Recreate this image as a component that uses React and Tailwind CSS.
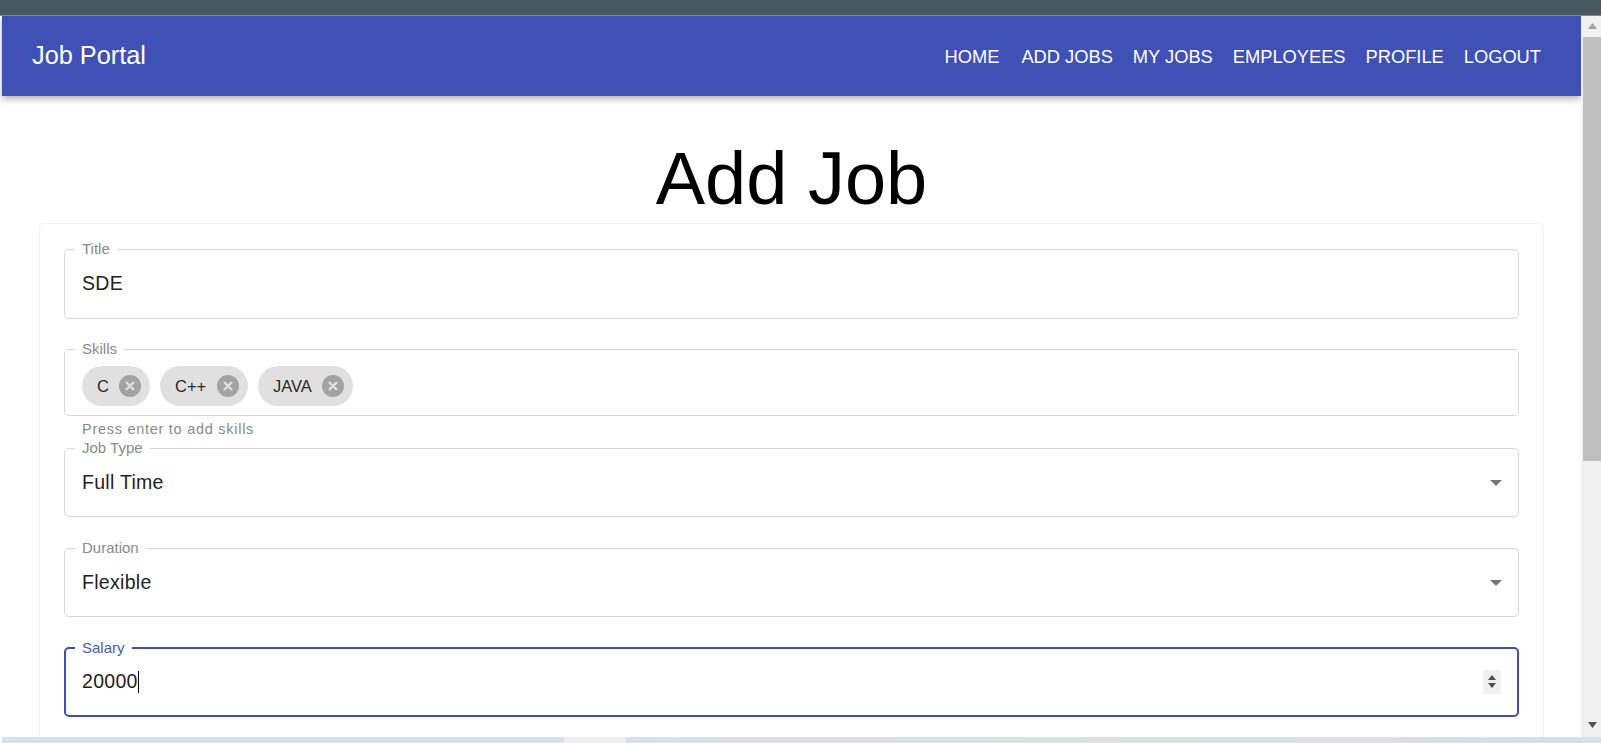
const navLinks = [
  { label: 'HOME', cls: 'mr-[22px]' },
  { label: 'ADD JOBS', cls: 'mr-[20px]' },
  { label: 'MY JOBS', cls: 'mr-[20px]' },
  { label: 'EMPLOYEES', cls: 'mr-[20px]' },
  { label: 'PROFILE', cls: 'mr-[20px]' },
  { label: 'LOGOUT', cls: '' },
];

function Field({ label, focused, className, bodyClass, children }) {
  return (
    <fieldset
      className={`rounded-[5px] pr-[10px] shrink-0 ${focused ? 'pl-[9px] border-2 border-[#3f51ad]' : 'pl-[10px] border border-[#d6d6d6]'} ${className}`}
    >
      <legend className={`px-[7px] text-[15px] leading-[10px] ${focused ? 'text-[#4a5bab]' : 'text-[#8a8a8a]'}`}>
        {label}
      </legend>
      <div className={`flex items-center pl-[7px] pb-[5px] text-[19.5px] tracking-[0.015em] ${bodyClass}`}>
        {children}
      </div>
    </fieldset>
  );
}

function Chip({ label, className }) {
  return (
    <div className={`h-10 rounded-full bg-[#e0e0e0] flex items-center justify-between pl-[15px] pr-[9px] text-[16.5px] tracking-normal text-[#2a2a2a] ${className}`}>
      <span>{label}</span>
      <svg width="22" height="22" viewBox="0 0 22 22" aria-hidden="true">
        <circle cx="11" cy="11" r="11" fill="#a3a3a3" />
        <path d="M7 7l8 8M15 7l-8 8" stroke="#e0e0e0" strokeWidth="2.4" />
      </svg>
    </div>
  );
}

function Caret() {
  return (
    <svg className="ml-auto mr-[6px]" width="12" height="6" viewBox="0 0 12 6" aria-hidden="true">
      <path d="M0 0h12L6 6z" fill="#757575" />
    </svg>
  );
}

export default function App() {
  return (
    <div className="h-[743px] w-[1601px] overflow-hidden flex flex-col bg-white font-['Liberation_Sans',Arial,sans-serif]">
      {/* Browser strip above the page */}
      <div className="h-[16px] shrink-0 bg-[#47585f] relative">
        <div className="h-px w-full absolute bottom-0 bg-[#7c8a9c]" />
      </div>

      <div className="flex-1 min-h-0 flex">
        <div className="flex-1 min-w-0 pl-[2px] flex flex-col overflow-hidden">
          {/* Navbar */}
          <header className="h-[80px] shrink-0 bg-[#3f51b5] text-white flex items-center pl-[30px] pr-[40px] shadow-[0_3px_7px_rgba(0,0,0,0.3)] relative">
            <div className="text-[25.3px] flex-1">Job Portal</div>
            <nav className="flex text-[18.3px] pt-[1px]">
              {navLinks.map(({ label, cls }) => (
                <span key={label} className={cls}>{label}</span>
              ))}
            </nav>
          </header>

          <h1 className="text-[74px] leading-[85px] text-center text-black mt-[40px] shrink-0">Add Job</h1>

          {/* Form card */}
          <main className="ml-[37px] w-[1505px] flex-1 min-h-0 mt-[2px] rounded-t-[5px] border border-b-0 border-[#f3f3f3] pt-[20px] pl-[24px] pr-[24px] flex flex-col text-[#222]">
            <Field label="Title" className="h-[75px]" bodyClass="h-[64px]">
              SDE
            </Field>

            <Field label="Skills" className="h-[72px] mt-[25px]" bodyClass="h-[61px]">
              <div className="flex gap-[10px] mt-[8px]">
                <Chip label="C" className="w-[68px]" />
                <Chip label="C++" className="w-[88px]" />
                <Chip label="JAVA" className="w-[95px]" />
              </div>
            </Field>
            <p className="pl-[18px] mt-[6px] h-[14px] leading-[14px] text-[14.5px] tracking-[0.05em] text-[#8a8a8a] shrink-0">
              Press enter to add skills
            </p>

            <Field label="Job Type" className="h-[74px] mt-[7px]" bodyClass="h-[65px]">
              Full Time
              <Caret />
            </Field>

            <Field label="Duration" className="h-[74px] mt-[26px]" bodyClass="h-[65px]">
              Flexible
              <Caret />
            </Field>

            <Field label="Salary" focused className="h-[74px] mt-[26px]" bodyClass="h-[62px]">
              <span>20000</span>
              <span className="w-px h-[22px] bg-black" />
              <div className="ml-auto mr-[6px] w-[18px] h-[24px] bg-[#f1f1f1] flex flex-col items-center justify-center gap-[3px]">
                <svg width="8" height="5" viewBox="0 0 8 5" aria-hidden="true"><path d="M0 5h8L4 0z" fill="#505050" /></svg>
                <svg width="8" height="5" viewBox="0 0 8 5" aria-hidden="true"><path d="M0 0h8L4 5z" fill="#505050" /></svg>
              </div>
            </Field>
          </main>
        </div>

        {/* Scrollbar */}
        <div className="w-[20px] shrink-0 bg-[#f1f1f1] flex flex-col items-center pl-[2px]">
          <svg className="mt-[7px]" width="9" height="6" viewBox="0 0 9 6" aria-hidden="true"><path d="M0 6h9L4.5 0z" fill="#a3a3a3" /></svg>
          <div className="mt-[8px] w-full h-[424px] bg-[#bfbfbf]" />
          <svg className="mt-auto mb-[9px]" width="9" height="6" viewBox="0 0 9 6" aria-hidden="true"><path d="M0 0h9L4.5 6z" fill="#505050" /></svg>
        </div>
      </div>

      {/* Desktop strip below the page */}
      <div className="h-[6px] shrink-0 ml-[2px] flex bg-[#d5e4eb]">
        <div className="w-[562px]" />
        <div className="w-[62px] bg-[#e9f0f3]" />
        <div className="flex-1 bg-gradient-to-r from-[#d5e4eb] via-[#d8e2e4] to-[#d2e2ea]" />
      </div>
    </div>
  );
}
